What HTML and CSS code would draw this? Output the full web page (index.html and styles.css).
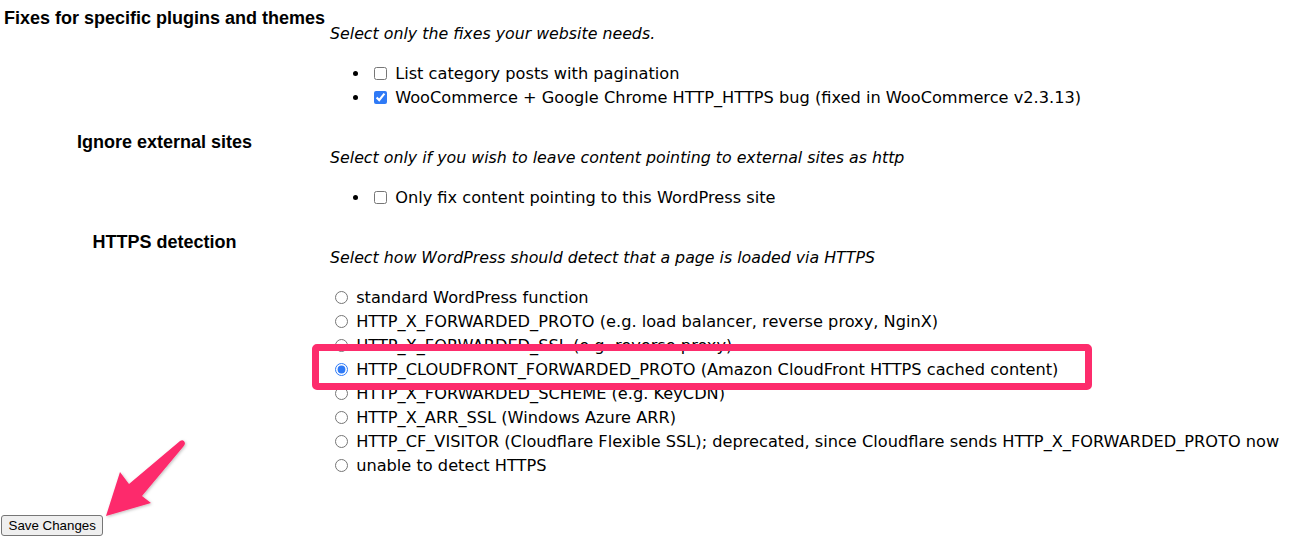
FILE: index.html
```html
<!DOCTYPE html>
<html>
<head>
<meta charset="utf-8">
<link rel="stylesheet" href="styles.css">
</head>
<body>
<div class="page">
  <form class="settings">
    <table class="form-table">
      <tr>
        <th>Fixes for specific plugins and themes</th>
        <td>
          <p class="desc">Select only the fixes your website needs.</p>
          <ul class="opts">
            <li><label><input type="checkbox"> List category posts with pagination</label></li>
            <li><label><input type="checkbox" checked> WooCommerce + Google Chrome HTTP_HTTPS bug (fixed in WooCommerce v2.3.13)</label></li>
          </ul>
        </td>
      </tr>
      <tr>
        <th>Ignore external sites</th>
        <td>
          <p class="desc">Select only if you wish to leave content pointing to external sites as http</p>
          <ul class="opts">
            <li><label><input type="checkbox"> Only fix content pointing to this WordPress site</label></li>
          </ul>
        </td>
      </tr>
      <tr>
        <th>HTTPS detection</th>
        <td>
          <p class="desc">Select how WordPress should detect that a page is loaded via HTTPS</p>
          <div class="radios">
            <label class="radio"><input type="radio" name="d"> standard WordPress function</label>
            <label class="radio"><input type="radio" name="d"> HTTP_X_FORWARDED_PROTO (e.g. load balancer, reverse proxy, NginX)</label>
            <label class="radio"><input type="radio" name="d"> HTTP_X_FORWARDED_SSL (e.g. reverse proxy)</label>
            <label class="radio"><input type="radio" name="d" checked> HTTP_CLOUDFRONT_FORWARDED_PROTO (Amazon CloudFront HTTPS cached content)</label>
            <label class="radio"><input type="radio" name="d"> HTTP_X_FORWARDED_SCHEME (e.g. KeyCDN)</label>
            <label class="radio"><input type="radio" name="d"> HTTP_X_ARR_SSL (Windows Azure ARR)</label>
            <label class="radio"><input type="radio" name="d"> HTTP_CF_VISITOR (Cloudflare Flexible SSL); deprecated, since Cloudflare sends HTTP_X_FORWARDED_PROTO now</label>
            <label class="radio"><input type="radio" name="d"> unable to detect HTTPS</label>
          </div>
        </td>
      </tr>
    </table>
    <p class="submit"><button type="button" class="btn">Save Changes</button></p>
  </form>

  <div class="highlight"></div>

  <svg class="arrow" width="120" height="110" viewBox="0 0 120 110">
    <defs>
      <filter id="sh" x="-20%" y="-20%" width="140%" height="140%">
        <feDropShadow dx="1" dy="1" stdDeviation="1.5" flood-color="#000" flood-opacity="0.25"/>
      </filter>
    </defs>
    <path d="M6 86 L20 42 L29 54 L80 11 Q84 9 85 13 Q85 15 83 17 L42 66 L51 73 Z" fill="#fd2c6c" filter="url(#sh)"/>
  </svg>
</div>
</body>
</html>
```
FILE: styles.css
```css
html, body {
  margin: 0;
  padding: 0;
  background: #fff;
}
body {
  font-family: "DejaVu Sans", "Liberation Sans", Arial, sans-serif;
  font-size: 16.2px;
  line-height: 24px;
  color: #000;
}
.page {
  position: relative;
  width: 1316px;
  height: 556px;
  overflow: hidden;
}
.settings {
  margin: 0;
  padding-top: 3px;
}
.form-table {
  border-collapse: separate;
  border-spacing: 2px;
  margin: 0;
}
.form-table th {
  width: 323px;
  padding: 1px;
  vertical-align: top;
  text-align: center;
  font-family: "Liberation Sans", Arial, Helvetica, sans-serif;
  font-size: 18px;
  font-weight: bold;
}
.form-table td {
  padding: 1px;
  vertical-align: top;
}
.desc {
  margin: 16px 0;
  font-style: italic;
  font-size: 15.8px;
}
.opts {
  margin: 16px 0;
  padding-left: 40px;
  list-style: disc;
}
.opts input[type="checkbox"] {
  margin: 3px 3px 3px 4px;
  width: 13px;
  height: 13px;
  vertical-align: -1px;
  accent-color: #2f7af6;
}
.radios {
  display: flex;
  flex-direction: column;
}
.radio {
  display: block;
  height: 24px;
}
.radio input {
  margin: 3px 3px 0 5px;
  width: 13px;
  height: 13px;
  vertical-align: -1px;
  accent-color: #2f7af6;
}
.submit {
  margin: 34px 0 0 1px;
  line-height: 1;
}
.btn {
  display: block;
  font-family: "Liberation Sans", Arial, Helvetica, sans-serif;
  font-size: 13.33px;
  line-height: 17px;
  height: 21px;
  padding: 0 6.5px;
  color: #000;
  background: #efefef;
  border: 1px solid #767676;
  border-radius: 3px;
}
.highlight {
  position: absolute;
  left: 312px;
  top: 344px;
  width: 780px;
  height: 46px;
  box-sizing: border-box;
  border: 7px solid #fd2c6c;
  border-radius: 5px;
}
.arrow {
  position: absolute;
  left: 100px;
  top: 430px;
}
```
